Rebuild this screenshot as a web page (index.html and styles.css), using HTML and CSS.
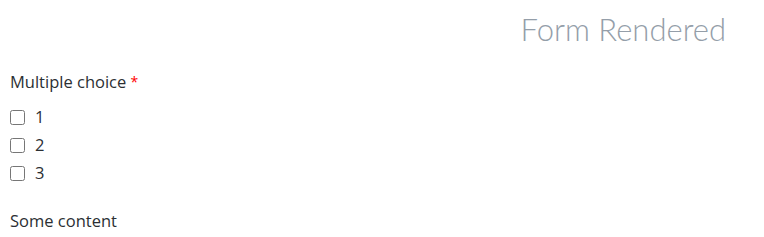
FILE: index.html
```html
<!DOCTYPE html>
<html lang="en">
<head>
    <meta charset="UTF-8">
    <title>Form Rendered</title>
    <link rel="stylesheet" href="styles.css">
</head>
<body>
    <div class="page">
        <h1 class="title">Form Rendered</h1>
        <div class="field">
            <div class="field-label">Multiple choice <span class="req">*</span></div>
            <ul class="choices">
                <li><label><input type="checkbox"> 1</label></li>
                <li><label><input type="checkbox"> 2</label></li>
                <li><label><input type="checkbox"> 3</label></li>
            </ul>
        </div>
        <p class="content">Some content</p>
    </div>
</body>
</html>
```

FILE: styles.css
```css
*{
    margin: 0;
    padding: 0;
    list-style-type: none;
    box-sizing: border-box;
}
body{
    font-family: "Open Sans", Lato, sans-serif;
    font-size: 16.5px;
    color: #2b2f33;
    background: #fff;
}
.page{
    padding: 10px 38px 0 10px;
}
.title{
    font-family: Lato, sans-serif;
    font-weight: 300;
    font-size: 31px;
    line-height: 38px;
    color: #949ea9;
    text-align: right;
}
.field{
    margin-top: 22px;
}
.field-label{
    line-height: 24px;
}
.req{
    color: #f00;
    font-size: 14px;
    vertical-align: top;
}
.choices{
    margin-top: 9px;
}
.choices li{
    height: 28px;
    line-height: 28px;
}
.choices label{
    display: flex;
    align-items: center;
    gap: 10px;
}
.choices input{
    width: 15px;
    height: 15px;
    margin: 0;
}
.content{
    margin-top: 22px;
    line-height: 24px;
}
```
